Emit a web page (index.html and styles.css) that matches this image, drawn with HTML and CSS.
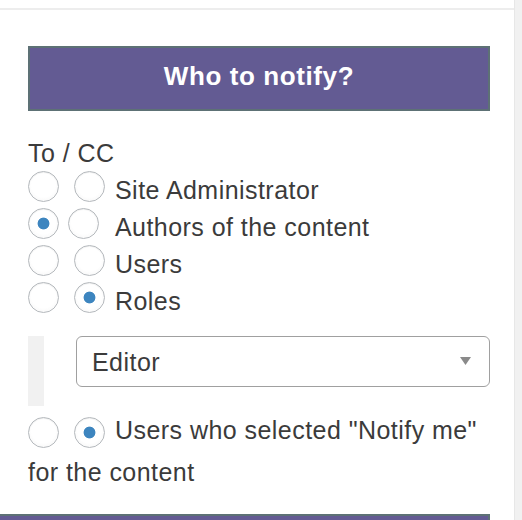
FILE: index.html
```
<!DOCTYPE html>
<html lang="en">
<head>
<meta charset="utf-8">
<title>Who to notify?</title>
<link rel="stylesheet" href="styles.css">
</head>
<body>
<div class="page">
  <div class="main">
    <div class="top-rule"></div>
    <section class="panel">
      <h2 class="panel-title">Who to notify?</h2>
      <div class="group-label">To / CC</div>
      <div class="choice">
        <input type="radio" class="radio" name="to-admin">
        <input type="radio" class="radio" name="cc-admin">
        <span class="choice-label">Site Administrator</span>
      </div>
      <div class="choice choice--tight">
        <input type="radio" class="radio" name="to-authors" checked>
        <input type="radio" class="radio" name="cc-authors">
        <span class="choice-label">Authors of the content</span>
      </div>
      <div class="choice">
        <input type="radio" class="radio" name="to-users">
        <input type="radio" class="radio" name="cc-users">
        <span class="choice-label">Users</span>
      </div>
      <div class="choice">
        <input type="radio" class="radio" name="to-roles">
        <input type="radio" class="radio" name="cc-roles" checked>
        <span class="choice-label">Roles</span>
      </div>
      <div class="roles">
        <div class="roles-bar"></div>
        <div class="select-wrap">
          <select class="select"><option>Editor</option></select>
          <svg class="select-arrow" viewBox="0 0 11 8" aria-hidden="true"><polygon points="0,0 11,0 5.5,8"/></svg>
        </div>
      </div>
      <p class="notify-me"><input type="radio" class="radio radio--first" name="to-notify"><input type="radio" class="radio radio--second" name="cc-notify" checked><span>Users who selected "Notify me" for the content</span></p>
    </section>
    <div class="next-bar"></div>
  </div>
  <div class="scrollbar"></div>
</div>
</body>
</html>
```
FILE: styles.css
```
html, body {
  margin: 0;
  padding: 0;
}

body {
  background: #fff;
  color: #3b3b3b;
  font-family: "Liberation Sans", Arial, sans-serif;
  font-size: 25px;
  letter-spacing: 0.45px;
}

.page {
  display: flex;
  width: 522px;
  height: 520px;
  overflow: hidden;
}

.main {
  flex: 1;
  min-width: 0;
  padding-top: 8px;
}

.top-rule {
  height: 2px;
  background: #ededed;
}

.scrollbar {
  width: 7px;
  flex: none;
  background: #f1f1f1;
  border-left: 1px solid #e7e7e7;
}

.panel {
  padding: 36px 24px 0 28px;
}

.panel-title {
  margin: 0;
  height: 57px;
  padding-bottom: 4px;
  border: 2px solid #5d7175;
  background: #635b93;
  color: #fff;
  font-size: 26px;
  font-weight: 700;
  letter-spacing: 0.6px;
  line-height: 57px;
  text-align: center;
}

.group-label {
  margin-top: 27px;
  line-height: 30px;
}

.choice {
  display: flex;
  align-items: center;
  height: 37px;
}

.radio {
  appearance: none;
  -webkit-appearance: none;
  box-sizing: border-box;
  flex: none;
  width: 31px;
  height: 31px;
  margin: 0;
  border: 1.5px solid #b5b9bd;
  border-radius: 50%;
  background: radial-gradient(circle at 50% 45%, #ffffff 0, #ffffff 55%, #f1f1f1 100%);
  box-shadow: inset 0 1px 1px rgba(0, 0, 0, 0.06);
}

.radio:checked {
  background:
    radial-gradient(circle, #3d85bf 0, #3d85bf 5.5px, rgba(61, 133, 191, 0) 6.3px),
    radial-gradient(circle at 50% 45%, #ffffff 0, #ffffff 55%, #f1f1f1 100%);
}

.choice .radio + .radio {
  margin-left: 15px;
}

.choice-label {
  margin-left: 10px;
  padding-top: 8px;
  line-height: 29px;
}

.choice--tight .radio + .radio {
  margin-left: 9px;
}

.choice--tight .choice-label {
  margin-left: 16px;
}

.roles {
  display: flex;
  margin-top: 20px;
}

.roles-bar {
  flex: none;
  width: 16px;
  height: 70px;
  background: #f1f1f1;
}

.select-wrap {
  position: relative;
  flex: 1;
  align-self: flex-start;
  margin-left: 32px;
}

.select {
  appearance: none;
  -webkit-appearance: none;
  display: block;
  box-sizing: border-box;
  width: 100%;
  height: 51px;
  margin: 0;
  padding: 0 40px 0 15px;
  border: 1.5px solid #a0a0a0;
  border-radius: 6px;
  background: #fff;
  color: #3b3b3b;
  font: inherit;
  letter-spacing: inherit;
}

.select-arrow {
  position: absolute;
  top: 21px;
  right: 19px;
  width: 11px;
  height: 8px;
  fill: #8a8a8a;
}

.notify-me {
  margin: 3px 0 0;
  line-height: 42px;
}

.notify-me .radio {
  display: inline-block;
  vertical-align: middle;
}

.notify-me .radio--first {
  margin-right: 15px;
}

.notify-me .radio--second {
  margin-right: 10px;
}

.next-bar {
  height: 20px;
  margin-top: 21px;
  margin-right: 24px;
  border-top: 2px solid #5d7175;
  border-right: 2px solid #5d7175;
  background: #635b93;
}
```
